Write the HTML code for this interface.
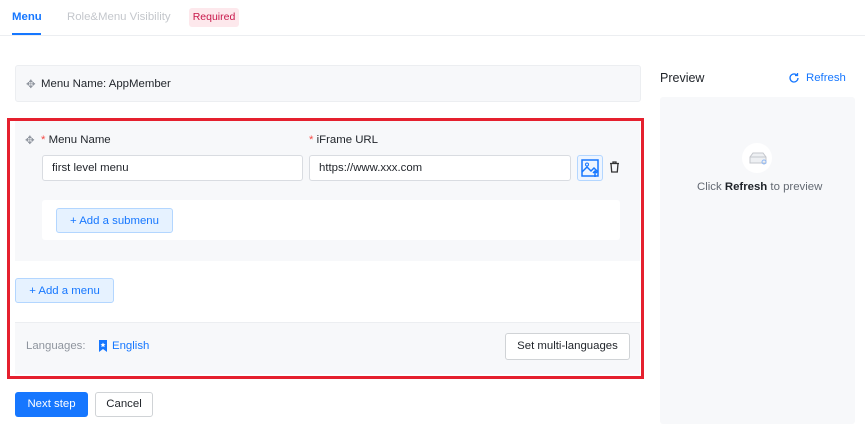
<!DOCTYPE html>
<html><head><meta charset="utf-8"><style>
*{box-sizing:border-box;margin:0;padding:0}
body{width:865px;height:432px;background:#fff;font-family:"Liberation Sans",sans-serif;font-size:11.4px;color:#1f2329;position:relative;overflow:hidden}
.a{position:absolute}
.btnl{position:absolute;background:#e6f2ff;border:1px solid #b3d6ff;border-radius:3px;color:#1677ff;display:flex;align-items:center;justify-content:center}
.inp{position:absolute;background:#fff;border:1px solid #d9dce1;border-radius:3px;height:26px;padding-left:9px;line-height:24px}
</style></head><body>
<div class="a" style="left:12px;top:11px;color:#1677ff;font-weight:bold">Menu</div>
<div class="a" style="left:12px;top:33px;width:29px;height:2px;background:#1677ff"></div>
<div class="a" style="left:67px;top:11px;color:#c4c7cc">Role&amp;Menu Visibility</div>
<div class="a" style="left:189px;top:8px;width:50px;height:19px;background:#fde8ec;border-radius:3px;color:#c8174a;font-size:10.5px;line-height:19px;text-align:center">Required</div>
<div class="a" style="left:0;top:35px;width:865px;height:1px;background:#eceef1"></div>

<div class="a" style="left:15px;top:65px;width:626px;height:37px;background:#f7f8fa;border:1px solid #eceef1;border-radius:3px"></div>
<div class="a" style="left:26px;top:77px;color:#8f959e">✥</div>
<div class="a" style="left:41px;top:78px">Menu Name: AppMember</div>

<div class="a" style="left:15px;top:121px;width:625px;height:140px;background:#f7f8fa"></div>
<div class="a" style="left:15px;top:322px;width:625px;height:52px;background:#f7f8fa;border-top:1px solid #eceef1"></div>
<div class="a" style="left:7px;top:118px;width:637px;height:261px;border:3px solid #e5202e"></div>

<div class="a" style="left:25px;top:133px;color:#8f959e">✥</div>
<div class="a" style="left:41px;top:134px"><span style="color:#f54a45">*</span> Menu Name</div>
<div class="a" style="left:309px;top:134px"><span style="color:#f54a45">*</span> iFrame URL</div>
<div class="inp" style="left:42px;top:155px;width:261px">first level menu</div>
<div class="inp" style="left:309px;top:155px;width:262px">https://www.xxx.com</div>
<div class="a" style="left:577px;top:155px;width:26px;height:26px;border:1px solid #b3d6ff;border-radius:3px;background:#eef5ff">
<svg width="24" height="24" viewBox="0 0 24 24"><rect x="4" y="4" width="16" height="16" fill="none" stroke="#1677ff" stroke-width="1.5"/><path d="M4 16l5-5 4 4 3-3 4 4" fill="none" stroke="#1677ff" stroke-width="1.5"/><circle cx="9" cy="8.5" r="1.5" fill="none" stroke="#1677ff"/><path d="M17 21v-6m-2 2l2-2 2 2" stroke="#1677ff" stroke-width="1.5" fill="none"/></svg></div>
<svg class="a" style="left:609px;top:161px" width="11" height="12" viewBox="0 0 11 12"><path d="M1 2.5h9M4 2.5V1h3v1.5M2 2.5l.7 8.5h5.6L9 2.5" fill="none" stroke="#333" stroke-width="1.3"/></svg>

<div class="a" style="left:42px;top:200px;width:578px;height:40px;background:#fff;border-radius:3px"></div>
<div class="btnl" style="left:56px;top:208px;width:117px;height:25px">+ Add a submenu</div>
<div class="btnl" style="left:15px;top:278px;width:99px;height:25px">+ Add a menu</div>

<div class="a" style="left:26px;top:340px;color:#8f959e">Languages:</div>
<svg class="a" style="left:98px;top:340px" width="10" height="12" viewBox="0 0 10 12"><path d="M1 0h8v12L5 9 1 12z" fill="#1677ff"/><path d="M5 2.5l.8 1.6 1.7.2-1.3 1.1.4 1.7L5 6.2 3.4 7.1l.4-1.7L2.5 4.3l1.7-.2z" fill="#fff"/></svg>
<div class="a" style="left:112px;top:340px;color:#1677ff">English</div>
<div class="a" style="left:505px;top:333px;width:125px;height:27px;background:#fff;border:1px solid #d0d3d6;border-radius:3px;text-align:center;line-height:25px">Set multi-languages</div>

<div class="a" style="left:15px;top:392px;width:73px;height:25px;background:#1677ff;border-radius:3px;color:#fff;text-align:center;line-height:25px">Next step</div>
<div class="a" style="left:95px;top:392px;width:58px;height:25px;border:1px solid #d0d3d6;border-radius:3px;text-align:center;line-height:23px">Cancel</div>

<div class="a" style="left:660px;top:71px;font-size:12.5px">Preview</div>
<svg class="a" style="left:788px;top:72px" width="12" height="12" viewBox="0 0 12 12"><path d="M10 6a4 4 0 1 1-1.2-2.9" fill="none" stroke="#1677ff" stroke-width="1.3"/><path d="M9.5 1v2.5H7" fill="none" stroke="#1677ff" stroke-width="1.3"/></svg>
<div class="a" style="left:806px;top:72px;color:#1677ff">Refresh</div>
<div class="a" style="left:660px;top:97px;width:195px;height:327px;background:#f7f8fa;border-radius:3px"></div>
<div class="a" style="left:742px;top:143px;width:30px;height:30px;border-radius:50%;background:#fff"></div>
<svg class="a" style="left:747px;top:150px" width="22" height="16" viewBox="0 0 22 16"><path d="M3 7l3-4h10l3 4v6H3z" fill="#eef0f3" stroke="#c4c7cc"/><path d="M3 7h16" stroke="#c4c7cc"/><circle cx="17" cy="12" r="2" fill="none" stroke="#8fb8f5"/></svg>
<div class="a" style="left:697px;top:181px;color:#646a73">Click <b style="color:#1f2329">Refresh</b> to preview</div>
</body></html>
